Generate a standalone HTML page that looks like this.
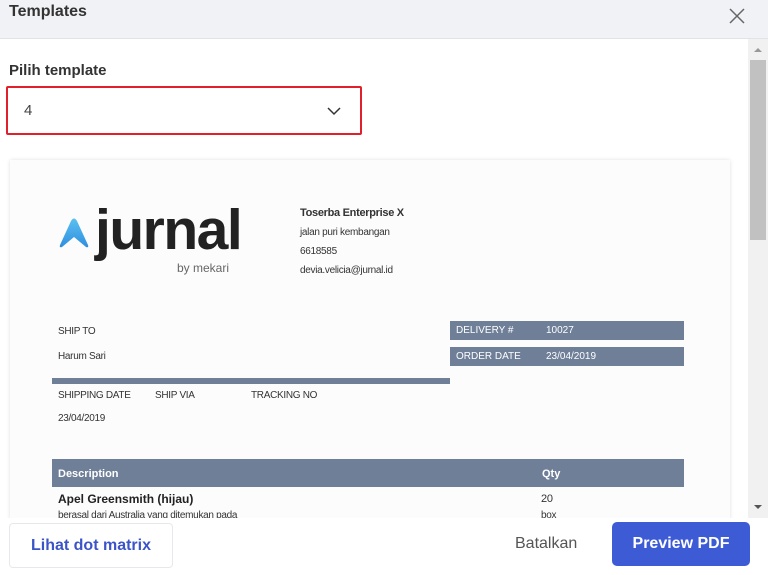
<!DOCTYPE html><html><head><style>
body{margin:0;width:768px;height:575px;overflow:hidden;background:#fff;font-family:"Liberation Sans",sans-serif;position:relative}
.a{position:absolute}
.hdr{left:0;top:0;width:768px;height:38px;background:#f1f2f5;border-bottom:1px solid #e2e3e6}
.s{font-size:10px;color:#333;letter-spacing:-0.3px}
.bar{background:#6f7f98;color:#fff;font-size:10px}
</style></head><body>
<div class="a hdr"></div>
<div class="a" style="left:9px;top:3px;font-size:16px;color:#333;font-weight:bold">Templates</div>
<svg class="a" style="left:728px;top:7px" width="18" height="18"><path d="M2 2L16 16M16 2L2 16" stroke="#666" stroke-width="1.5"/></svg>
<div class="a" style="left:748px;top:39px;width:20px;height:479px;background:#f1f1f1"></div>
<svg class="a" style="left:753px;top:46px" width="10" height="8"><path d="M1 6L5 2L9 6Z" fill="#999"/></svg>
<svg class="a" style="left:753px;top:503px" width="10" height="8"><path d="M1 2L5 6L9 2Z" fill="#555"/></svg>
<div class="a" style="left:750px;top:60px;width:16px;height:180px;background:#c1c1c1"></div>
<div class="a" style="left:9px;top:62px;font-size:15px;color:#333;font-weight:bold">Pilih template</div>
<div class="a" style="left:6px;top:86px;width:352px;height:45px;border:2px solid #e0202a;border-radius:2px"></div>
<div class="a" style="left:24px;top:102px;font-size:15px;color:#444">4</div>
<svg class="a" style="left:327px;top:106px" width="14" height="10"><path d="M1 2L7 8L13 2" stroke="#333" stroke-width="1.5" fill="none"/></svg>
<div class="a" style="left:10px;top:160px;width:720px;height:360px;background:#fcfcfc;box-shadow:0 0 4px rgba(0,0,0,.12)"></div>
<svg class="a" style="left:56px;top:215px" width="36" height="34"><defs><linearGradient id="g" x1="0" y1="0" x2="0" y2="1"><stop offset="0" stop-color="#5cc0f0"/><stop offset="1" stop-color="#2f8fe0"/></linearGradient></defs><path d="M4 30L15 6Q18 1 21 6L32 30Q33 33 30 32L18 22L6 32Q3 33 4 30Z" fill="url(#g)"/></svg>
<div class="a" style="left:95px;top:200px;font-size:57px;font-weight:bold;color:#222;letter-spacing:-1.5px;line-height:60px">jurnal</div>
<div class="a" style="left:177px;top:261px;font-size:12px;color:#666">by mekari</div>
<div class="a s" style="left:300px;top:207px;font-weight:bold;font-size:11px">Toserba Enterprise X</div>
<div class="a s" style="left:300px;top:227px">jalan puri kembangan</div>
<div class="a s" style="left:300px;top:246px">6618585</div>
<div class="a s" style="left:300px;top:265px">devia.velicia@jurnal.id</div>
<div class="a s" style="left:58px;top:326px">SHIP TO</div>
<div class="a s" style="left:58px;top:351px">Harum Sari</div>
<div class="a bar" style="left:450px;top:321px;width:234px;height:19px"><span style="position:absolute;left:6px;top:4px">DELIVERY #</span><span style="position:absolute;left:96px;top:4px">10027</span></div>
<div class="a bar" style="left:450px;top:347px;width:234px;height:19px"><span style="position:absolute;left:6px;top:4px">ORDER DATE</span><span style="position:absolute;left:96px;top:4px">23/04/2019</span></div>
<div class="a" style="left:52px;top:378px;width:398px;height:6px;background:#6f7f98"></div>
<div class="a s" style="left:58px;top:390px">SHIPPING DATE</div>
<div class="a s" style="left:155px;top:390px">SHIP VIA</div>
<div class="a s" style="left:251px;top:390px">TRACKING NO</div>
<div class="a s" style="left:58px;top:413px">23/04/2019</div>
<div class="a bar" style="left:52px;top:459px;width:632px;height:28px;font-weight:bold;font-size:11px"><span style="position:absolute;left:6px;top:9px">Description</span><span style="position:absolute;left:490px;top:9px">Qty</span></div>
<div class="a" style="left:58px;top:492px;font-size:12px;font-weight:bold;color:#222">Apel Greensmith (hijau)</div>
<div class="a s" style="left:541px;top:493px;font-size:11px">20</div>
<div class="a s" style="left:58px;top:510px">berasal dari Australia yang ditemukan pada</div>
<div class="a s" style="left:541px;top:510px">box</div>
<div class="a" style="left:0;top:518px;width:768px;height:57px;background:#fff"></div>
<div class="a" style="left:9px;top:523px;width:162px;height:43px;border:1px solid #e8e8ec;border-radius:4px;color:#3b55c9;font-size:16px;font-weight:bold;line-height:43px;text-align:center">Lihat dot matrix</div>
<div class="a" style="left:515px;top:535px;font-size:16px;color:#555">Batalkan</div>
<div class="a" style="left:612px;top:522px;width:138px;height:44px;background:#3e5bd6;border-radius:5px;color:#fff;font-size:16px;font-weight:bold;line-height:44px;text-align:center">Preview PDF</div>
</body></html>
